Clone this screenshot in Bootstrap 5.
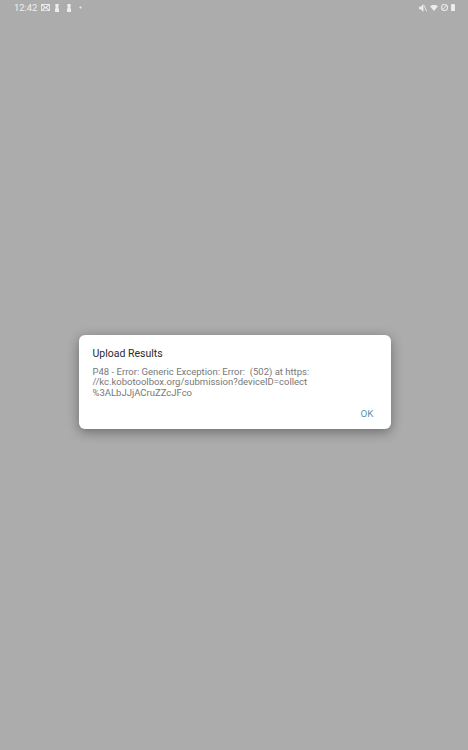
<!DOCTYPE html>
<html lang="en">
<head>
<meta charset="utf-8">
<title>Upload Results</title>
<link href="https://cdn.jsdelivr.net/npm/bootstrap@5.3.0/dist/css/bootstrap.min.css" rel="stylesheet">
<style>
html,body{height:100%;margin:0}
body{background:#acacac;font-family:Roboto,"Liberation Sans",sans-serif;overflow:hidden}
.screen{height:750px}
.status-strip{height:15px;padding:0 13px 0 14px;color:#f0f0f0;font-size:9.4px;line-height:15px}
.status-strip svg{display:block;fill:#ececec}
.left-set svg.mail{margin-left:4px}
.left-set svg.hg1{margin-left:5px}
.left-set svg.hg2{margin-left:8px}
.left-set svg.dot{margin-left:8px}
.right-set{gap:3px}
.dlg-zone{height:735px;padding:320px 77px 0 78.5px}
.dlg{background:#fff;border-radius:6px;height:94px;width:312px;box-shadow:0 3px 12px rgba(0,0,0,.38);padding:12px 14px 0}
.dlg-title{font-size:10.5px;line-height:13px;color:#2a2a2a;margin:0 0 6.500px;font-weight:400}
.dlg-msg{font-size:9.5px;line-height:10.7px;color:#777;margin:0;white-space:pre}
.dlg-foot{padding:9px 3px 0 0}
.ok-btn{font-size:9.800px;line-height:12px;color:#5a94a8;border:0;background:none;padding:0}
</style>
</head>
<body>
<div class="screen d-flex flex-column">
  <div class="status-strip d-flex justify-content-between align-items-center">
    <div class="left-set d-flex align-items-center">
      <span>12:42</span>
      <svg class="mail" width="9" height="7" viewBox="0 0 10 8"><path d="M0 0h10v8H0zM1 1.600V6.400L3.500 4zM9 1.600 6.500 4 9 6.400zM2 1l3 2.300L8 1zM2 7h6L5.700 4.800 5 5.400l-.7-.6z" fill-rule="evenodd"/></svg>
      <svg class="hg1" width="4" height="8" viewBox="0 0 6 9" preserveAspectRatio="none"><path d="M.5 0h5v2.500L4.800 4 6 6V9H0V6L1.200 4 .5 2.500z"/></svg>
      <svg class="hg2" width="4" height="8" viewBox="0 0 6 9" preserveAspectRatio="none"><path d="M.5 0h5v2.500L4.800 4 6 6V9H0V6L1.200 4 .5 2.500z"/></svg>
      <svg class="dot" width="3" height="3" viewBox="0 0 3 3"><circle cx="1.500" cy="1.500" r="1.100"/></svg>
    </div>
    <div class="right-set d-flex align-items-center">
      <svg width="8" height="8" viewBox="0 0 9 9"><path d="M0 3h2l3-3v9L2 6H0zM6 1l3 7-.8.3-3-7z"/></svg>
      <svg width="8" height="6" viewBox="0 0 9 7" preserveAspectRatio="none"><path d="M0 1.500C2.500-.5 6.500-.5 9 1.500L4.500 7z"/></svg>
      <svg width="7" height="7" viewBox="0 0 8 8"><path d="M4 0a4 4 0 1 0 0 8 4 4 0 0 0 0-8zm0 1.200c.6 0 1.200.2 1.600.5L1.700 5.600A2.800 2.800 0 0 1 4 1.200zm0 5.600c-.6 0-1.100-.2-1.600-.5l3.900-3.900A2.800 2.800 0 0 1 4 6.800z"/></svg>
      <svg width="4" height="7" viewBox="0 0 5 8" preserveAspectRatio="none"><path d="M1 0h3l1 1v7H0V1z"/></svg>
    </div>
  </div>
  <div class="dlg-zone">
    <div class="dlg d-flex flex-column">
      <h1 class="dlg-title">Upload Results</h1>
      <p class="dlg-msg">P48 - Error: Generic Exception: Error:  (502) at https:
//kc.kobotoolbox.org/submission?deviceID=collect
%3ALbJJjACruZZcJFco</p>
      <div class="dlg-foot d-flex justify-content-end">
        <button type="button" class="btn ok-btn">OK</button>
      </div>
    </div>
  </div>
</div>
<script src="https://cdn.jsdelivr.net/npm/bootstrap@5.3.0/dist/js/bootstrap.bundle.min.js"></script>
</body>
</html>
